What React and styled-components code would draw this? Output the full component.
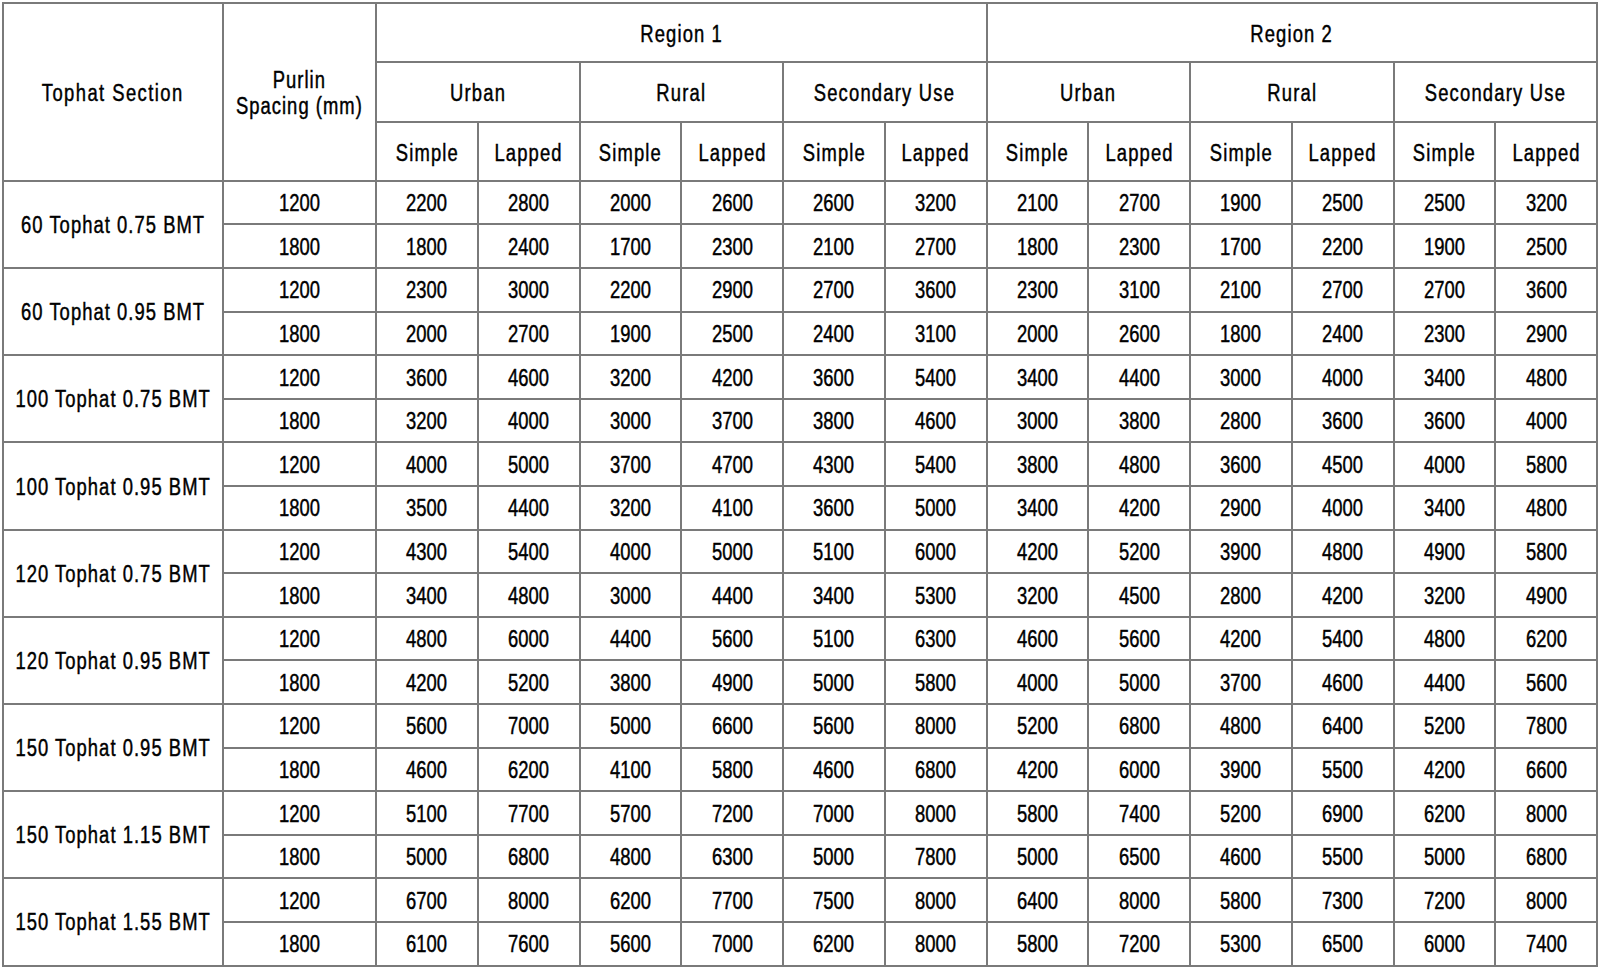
import React from 'react'
import styled, { createGlobalStyle } from 'styled-components'

const sections = [
  ['60 Tophat 0.75 BMT', [
    [2200, 2800, 2000, 2600, 2600, 3200, 2100, 2700, 1900, 2500, 2500, 3200],
    [1800, 2400, 1700, 2300, 2100, 2700, 1800, 2300, 1700, 2200, 1900, 2500],
  ]],
  ['60 Tophat 0.95 BMT', [
    [2300, 3000, 2200, 2900, 2700, 3600, 2300, 3100, 2100, 2700, 2700, 3600],
    [2000, 2700, 1900, 2500, 2400, 3100, 2000, 2600, 1800, 2400, 2300, 2900],
  ]],
  ['100 Tophat 0.75 BMT', [
    [3600, 4600, 3200, 4200, 3600, 5400, 3400, 4400, 3000, 4000, 3400, 4800],
    [3200, 4000, 3000, 3700, 3800, 4600, 3000, 3800, 2800, 3600, 3600, 4000],
  ]],
  ['100 Tophat 0.95 BMT', [
    [4000, 5000, 3700, 4700, 4300, 5400, 3800, 4800, 3600, 4500, 4000, 5800],
    [3500, 4400, 3200, 4100, 3600, 5000, 3400, 4200, 2900, 4000, 3400, 4800],
  ]],
  ['120 Tophat 0.75 BMT', [
    [4300, 5400, 4000, 5000, 5100, 6000, 4200, 5200, 3900, 4800, 4900, 5800],
    [3400, 4800, 3000, 4400, 3400, 5300, 3200, 4500, 2800, 4200, 3200, 4900],
  ]],
  ['120 Tophat 0.95 BMT', [
    [4800, 6000, 4400, 5600, 5100, 6300, 4600, 5600, 4200, 5400, 4800, 6200],
    [4200, 5200, 3800, 4900, 5000, 5800, 4000, 5000, 3700, 4600, 4400, 5600],
  ]],
  ['150 Tophat 0.95 BMT', [
    [5600, 7000, 5000, 6600, 5600, 8000, 5200, 6800, 4800, 6400, 5200, 7800],
    [4600, 6200, 4100, 5800, 4600, 6800, 4200, 6000, 3900, 5500, 4200, 6600],
  ]],
  ['150 Tophat 1.15 BMT', [
    [5100, 7700, 5700, 7200, 7000, 8000, 5800, 7400, 5200, 6900, 6200, 8000],
    [5000, 6800, 4800, 6300, 5000, 7800, 5000, 6500, 4600, 5500, 5000, 6800],
  ]],
  ['150 Tophat 1.55 BMT', [
    [6700, 8000, 6200, 7700, 7500, 8000, 6400, 8000, 5800, 7300, 7200, 8000],
    [6100, 7600, 5600, 7000, 6200, 8000, 5800, 7200, 5300, 6500, 6000, 7400],
  ]],
]

const regions = ['Region 1', 'Region 2']
const uses = ['Urban', 'Rural', 'Secondary Use']

// the reference uses a condensed face, so a regular face is squeezed
function Label({ spacing = 0, children }) {
  return (
    <Center>
      <Squeeze $spacing={spacing}>{children}</Squeeze>
    </Center>
  )
}

function App() {
  return (
    <>
      <GlobalStyle />
      <Table>
        <colgroup>
          <col style={{ width: 220 }} />
          <col style={{ width: 153 }} />
          {Array.from({ length: 12 }, (_, i) => <col key={i} />)}
        </colgroup>
        <thead>
          <HeadRow>
            <HeadCell rowSpan={3}><Label spacing={1.8}>Tophat Section</Label></HeadCell>
            <HeadCell rowSpan={3}>
              <Label spacing={1.3}>Purlin</Label>
              <Label spacing={1.3}>Spacing (mm)</Label>
            </HeadCell>
            {regions.map(r => (
              <HeadCell key={r} colSpan={6}><Label spacing={1.4}>{r}</Label></HeadCell>
            ))}
          </HeadRow>
          <HeadRow>
            {regions.map(r => uses.map(u => (
              <HeadCell key={r + u} colSpan={2}><Label spacing={1.5}>{u}</Label></HeadCell>
            )))}
          </HeadRow>
          <HeadRow>
            {Array.from({ length: 6 }, (_, i) => (
              <React.Fragment key={i}>
                <HeadCell><Label spacing={1.4}>Simple</Label></HeadCell>
                <HeadCell><Label spacing={1.4}>Lapped</Label></HeadCell>
              </React.Fragment>
            ))}
          </HeadRow>
        </thead>
        <tbody>
          {sections.map(([name, rows]) => rows.map((vals, i) => (
            <Row key={name + i}>
              {i === 0 && <Cell rowSpan={2}><Label spacing={1.3}>{name}</Label></Cell>}
              <Cell><Label>{i === 0 ? 1200 : 1800}</Label></Cell>
              {vals.map((v, j) => <Cell key={j}><Label>{v}</Label></Cell>)}
            </Row>
          )))}
        </tbody>
      </Table>
    </>
  )
}

const GlobalStyle = createGlobalStyle`
  body {
    margin: 0;
    background: #fff;
    font-family: "Liberation Sans", Arial, sans-serif;
    color: #000;
  }
`

const Table = styled.table`
  margin: 2px 0 0 2px;
  width: 1596px;
  border-collapse: collapse;
  table-layout: fixed;
  border: 2px solid #999;
`

const HeadRow = styled.tr`
  height: 59.3px;
`

const Row = styled.tr`
  height: 43.6px;
`

const HeadCell = styled.th`
  padding: 3px 0 0;
  border: 2px solid #7a7a7a;
  font-weight: normal;
  font-size: 23px;
  line-height: 26px;
  vertical-align: middle;
`

const Cell = styled.td`
  padding: 1px 0 0;
  border: 2px solid #7a7a7a;
  font-size: 23px;
  line-height: 26px;
  vertical-align: middle;
`

const Center = styled.div`
  display: flex;
  justify-content: center;
`

const Squeeze = styled.span`
  display: inline-block;
  white-space: nowrap;
  letter-spacing: ${p => p.$spacing}px;
  transform: scaleX(0.8);
  -webkit-text-stroke: 0.45px #000;
`

export default App
